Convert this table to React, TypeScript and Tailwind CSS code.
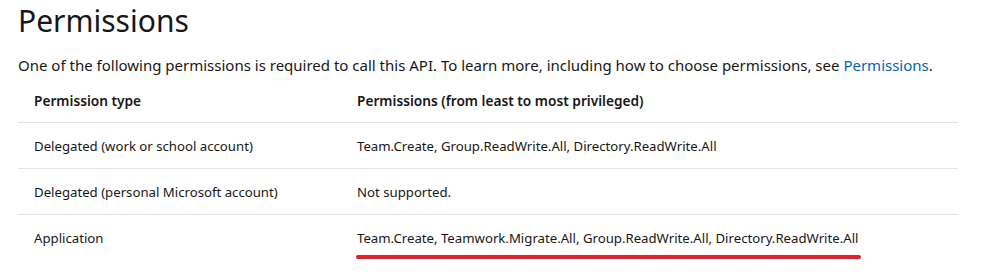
import React from "react";

const rows = [
  ["Delegated (work or school account)", "Team.Create, Group.ReadWrite.All, Directory.ReadWrite.All"],
  ["Delegated (personal Microsoft account)", "Not supported."],
  ["Application", "Team.Create, Teamwork.Migrate.All, Group.ReadWrite.All, Directory.ReadWrite.All"],
];

export default function App() {
  return (
    <div
      className="w-[984px] h-[277px] bg-white overflow-hidden pl-[18px] pr-[26px] pt-[2px] text-[#171717]"
      style={{ fontFamily: '"Noto Sans", "Open Sans", sans-serif' }}
    >
      <h1 className="text-[30px] leading-[38px] font-normal">Permissions</h1>
      <p className="mt-[15px] text-[15px] leading-[20px]">
        One of the following permissions is required to call this API. To learn more, including how to choose permissions, see{" "}
        <a className="text-[#0065b3]">Permissions</a>.
      </p>
      <table className="mt-[7px] w-[940px] border-collapse text-[13.2px]">
        <thead>
          <tr className="border-b border-[#e3e3e3] text-[13.7px]">
            <th className="w-[339px] text-left font-semibold pl-4 h-[40px] align-middle">Permission type</th>
            <th className="text-left font-semibold h-[40px] align-middle">Permissions (from least to most privileged)</th>
          </tr>
        </thead>
        <tbody>
          {rows.map((r, i) => (
            <tr key={i} className={i < 2 ? "border-b border-[#e3e3e3]" : ""}>
              <td className="pl-4 pt-[3px] h-[46px] align-middle">{r[0]}</td>
              <td className="pt-[3px] h-[46px] align-middle relative">
                {r[1]}
                {i === 2 && (
                  <span className="absolute left-[-1px] top-[40px] w-[505px] h-[4px] rounded-full bg-[#e8202a]" />
                )}
              </td>
            </tr>
          ))}
        </tbody>
      </table>
    </div>
  );
}
